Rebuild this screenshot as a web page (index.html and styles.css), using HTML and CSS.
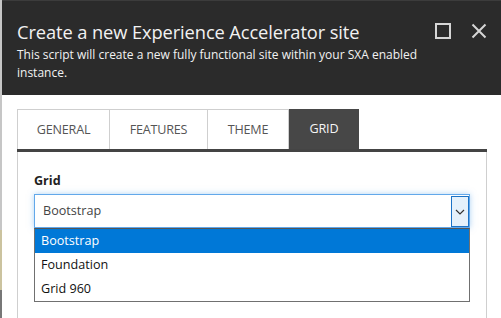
FILE: index.html
```html
<!DOCTYPE html>
<html lang="en">
<head>
    <link rel="stylesheet" href="styles.css">
</head>
<body>
    <div class="dialog">
        <div class="header">
            <div class="header-text">
                <h1 class="title">Create a new Experience Accelerator site</h1>
                <p class="subtitle">This script will create a new fully functional site within your SXA enabled instance.</p>
            </div>
            <div class="controls">
                <svg width="16" height="16" viewBox="0 0 16 16"><rect x="1" y="1" width="14" height="14" fill="none" stroke="#d6d6d6" stroke-width="2"/></svg>
                <svg width="16" height="16" viewBox="0 0 16 16"><path d="M1.5 1.5 L14.5 14.5 M14.5 1.5 L1.5 14.5" stroke="#d6d6d6" stroke-width="2"/></svg>
            </div>
        </div>
        <div class="body">
            <div class="tabs">
                <div class="tab">GENERAL</div>
                <div class="tab">FEATURES</div>
                <div class="tab">THEME</div>
                <div class="tab active">GRID</div>
            </div>
            <div class="panel">
                <div class="label">Grid</div>
                <div class="select">
                    <span>Bootstrap</span>
                    <div class="arrow">
                        <svg width="10" height="6" viewBox="0 0 10 6"><path d="M1 1 L5 5 L9 1" fill="none" stroke="#333" stroke-width="1.2"/></svg>
                    </div>
                </div>
                <div class="list">
                    <div class="option selected">Bootstrap</div>
                    <div class="option">Foundation</div>
                    <div class="option">Grid 960</div>
                </div>
            </div>
        </div>
    </div>
</body>
</html>
```

FILE: styles.css
```css
body
{
    margin: 0;
    width: 501px;
    height: 318px;
    overflow: hidden;
    font-family: "Open Sans", "Noto Sans", sans-serif;
    background: linear-gradient(#c6c6c6 0, #c6c6c6 230px, #cbc39f 230px, #cbc39f 290px, #777 290px);
}
.dialog
{
    margin-left: 2px;
    height: 318px;
    overflow: hidden;
    background-color: #fff;
}
.header
{
    display: flex;
    justify-content: space-between;
    background-color: #2b2b2b;
    height: 95px;
    padding: 0 14px 0 15px;
    box-sizing: border-box;
    border-top: 1px solid #3c3c3c;
}
.header-text
{
    flex: 1;
    min-width: 0;
}
.title
{
    margin: 18px 0 0 0;
    font-size: 18.3px;
    font-weight: normal;
    line-height: 26px;
    color: #f2f2f2;
    letter-spacing: -0.1px;
}
.subtitle
{
    margin: 1px 0 0 0;
    width: 420px;
    font-size: 12px;
    line-height: 18px;
    color: #f2f2f2;
}
.controls
{
    display: flex;
    gap: 20px;
    margin-top: 22px;
}
.body
{
    padding: 14px 14px 0 15px;
}
.tabs
{
    display: flex;
    border-bottom: 3px solid #444;
}
.tab
{
    height: 40px;
    line-height: 40px;
    text-align: center;
    font-size: 12.6px;
    color: #555;
    border: 1px solid #cfcfcf;
    border-bottom: none;
    border-left: none;
    box-sizing: border-box;
    letter-spacing: -0.2px;
}
.tab:nth-child(1) { width: 93px; border-left: 1px solid #cfcfcf; }
.tab:nth-child(2) { width: 98px; }
.tab:nth-child(3) { width: 81px; }
.tab.active
{
    width: 70px;
    background-color: #474747;
    color: #f5f5f5;
    border: none;
}
.panel
{
    border-left: 1px solid #cfcfcf;
    border-right: 1px solid #cfcfcf;
    height: 166px;
    box-sizing: border-box;
    padding: 20px 16px 0 16px;
}
.label
{
    font-size: 12.6px;
    font-weight: bold;
    color: #222;
    line-height: 18px;
}
.select
{
    margin-top: 4px;
    height: 34px;
    border: 1px solid #62a8ea;
    box-shadow: 0 0 6px rgba(98, 168, 234, 0.5);
    display: flex;
    justify-content: space-between;
    box-sizing: border-box;
    font-size: 12.6px;
    color: #444;
}
.select span
{
    padding: 7px 0 0 8px;
}
.arrow
{
    width: 16px;
    height: 29px;
    margin: 1px 0 0 0;
    border: 1px solid #1c73c7;
    background-color: #e5f1fb;
    display: flex;
    justify-content: center;
    align-items: center;
}
.list
{
    border: 1px solid #707070;
    border-top-color: #555;
}
.option
{
    height: 24px;
    line-height: 24px;
    padding-left: 6px;
    font-size: 12.6px;
    color: #111;
}
.option.selected
{
    background-color: #0078d7;
    color: #fff;
}
```
